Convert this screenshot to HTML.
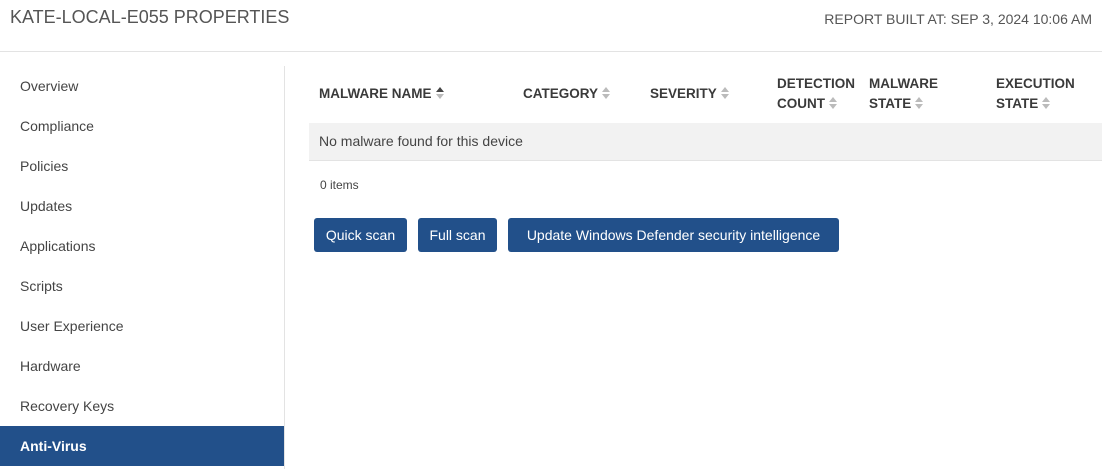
<!DOCTYPE html>
<html><head><style>
*{margin:0;padding:0;box-sizing:border-box}
body{width:1102px;height:469px;background:#fff;font-family:"Liberation Sans",sans-serif;color:#333;position:relative;overflow:hidden}
.a{position:absolute;white-space:nowrap}
.nav{position:absolute;left:0;width:284px;height:40px;line-height:40px;padding-left:20px;font-size:14px;color:#444}
.th{position:absolute;font-size:13.5px;font-weight:bold;color:#3a3a3a;line-height:20px}
.s{display:inline-block;width:8px;height:12px;vertical-align:-1px;margin-left:4px}
.btn{position:absolute;top:218px;height:34px;background:#22508a;color:#fff;border-radius:3px;font-size:14px;line-height:34px;text-align:center}
</style></head><body>
<div class="a" style="left:10px;top:7px;font-size:18px;color:#555">KATE-LOCAL-E055 PROPERTIES</div>
<div class="a" style="right:10px;top:11px;font-size:14px;color:#555">REPORT BUILT AT: SEP 3, 2024 10:06 AM</div>
<div class="a" style="left:0;top:51px;width:1102px;height:1px;background:#e3e3e3"></div>
<div class="a" style="left:284px;top:66px;width:1px;height:403px;background:#e3e3e3"></div>
<div class="nav" style="top:66px">Overview</div>
<div class="nav" style="top:106px">Compliance</div>
<div class="nav" style="top:146px">Policies</div>
<div class="nav" style="top:186px">Updates</div>
<div class="nav" style="top:226px">Applications</div>
<div class="nav" style="top:266px">Scripts</div>
<div class="nav" style="top:306px">User Experience</div>
<div class="nav" style="top:346px">Hardware</div>
<div class="nav" style="top:386px">Recovery Keys</div>
<div class="nav" style="top:426px;background:#22508a;color:#fff;font-weight:bold">Anti-Virus</div>

<div class="th" style="left:319px;top:84px">MALWARE NAME<svg class="s" viewBox="0 0 8 12"><path d="M4 0L8 5H0Z" fill="#444"/><path d="M4 12L8 7H0Z" fill="#bbb"/></svg></div>
<div class="th" style="left:523px;top:84px">CATEGORY<svg class="s" viewBox="0 0 8 12"><path d="M4 0L8 5H0Z" fill="#bbb"/><path d="M4 12L8 7H0Z" fill="#bbb"/></svg></div>
<div class="th" style="left:650px;top:84px">SEVERITY<svg class="s" viewBox="0 0 8 12"><path d="M4 0L8 5H0Z" fill="#bbb"/><path d="M4 12L8 7H0Z" fill="#bbb"/></svg></div>
<div class="th" style="left:777px;top:74px">DETECTION<br>COUNT<svg class="s" viewBox="0 0 8 12"><path d="M4 0L8 5H0Z" fill="#bbb"/><path d="M4 12L8 7H0Z" fill="#bbb"/></svg></div>
<div class="th" style="left:869px;top:74px">MALWARE<br>STATE<svg class="s" viewBox="0 0 8 12"><path d="M4 0L8 5H0Z" fill="#bbb"/><path d="M4 12L8 7H0Z" fill="#bbb"/></svg></div>
<div class="th" style="left:996px;top:74px">EXECUTION<br>STATE<svg class="s" viewBox="0 0 8 12"><path d="M4 0L8 5H0Z" fill="#bbb"/><path d="M4 12L8 7H0Z" fill="#bbb"/></svg></div>

<div class="a" style="left:309px;top:123px;width:793px;height:38px;background:#f2f2f2;border-bottom:1px solid #e3e3e3;font-size:14px;line-height:36px;padding-left:10px;color:#444">No malware found for this device</div>
<div class="a" style="left:320px;top:178px;font-size:12px;color:#444">0 items</div>
<div class="btn" style="left:314px;width:93px">Quick scan</div>
<div class="btn" style="left:418px;width:79px">Full scan</div>
<div class="btn" style="left:508px;width:331px">Update Windows Defender security intelligence</div>
</body></html>
